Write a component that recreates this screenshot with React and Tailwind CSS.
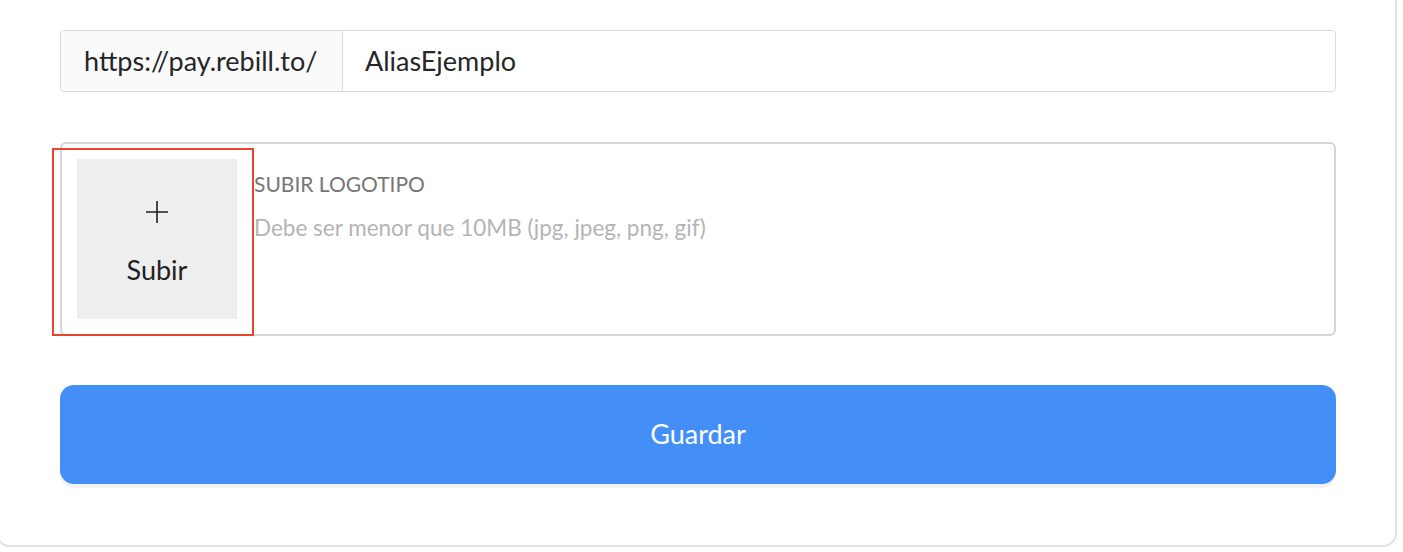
export default function App() {
  return (
    <div
      className="w-[1403px] h-[552px] bg-white overflow-hidden"
      style={{ fontFamily: '"Source Sans Pro", Lato, "Noto Sans", sans-serif' }}
    >
      <div className="ml-[-4px] mt-[-20px] w-[1401px] h-[567px] bg-white border-2 border-[#e2e2e2] rounded-[14px] pt-[48px] pl-[62px] pr-[59px]">
        <div className="flex h-[62px] border border-[#d9d9d9] rounded-[4px] overflow-hidden">
          <div className="w-[282px] shrink-0 bg-[#fafafa] border-r border-[#d9d9d9] flex items-center pl-[23px] text-[27px] text-[#262626]">
            https://pay.rebill.to/
          </div>
          <input
            className="flex-1 pl-[22px] text-[27px] text-[#262626] outline-none bg-white"
            defaultValue="AliasEjemplo"
          />
        </div>

        <div className="relative mt-[50px] h-[194px] border-2 border-[#d6d6d6] rounded-[6px] flex pt-[15px] pl-[15px]">
          <div className="w-[160px] h-[160px] bg-[#eeeeee] flex flex-col items-center pt-[41px] shrink-0">
            <svg width="24" height="24" viewBox="0 0 24 24">
              <path d="M12 1v22M1 12h22" stroke="#1f1f1f" strokeWidth="1.6" fill="none" />
            </svg>
            <span className="mt-[32px] text-[27px] text-[#222] leading-none">Subir</span>
          </div>
          <div className="pl-[17px] pt-[12px]">
            <div className="text-[21px] text-[#767676] leading-[26px]">SUBIR LOGOTIPO</div>
            <div className="mt-[18px] text-[22.5px] text-[#b4b4b4] leading-[26px]">
              Debe ser menor que 10MB (jpg, jpeg, png, gif)
            </div>
          </div>
          <div className="absolute left-[-10px] top-[4px] w-[202px] h-[188px] border-2 border-[#e8452d] pointer-events-none" />
        </div>

        <button className="mt-[49px] w-full h-[99px] bg-[#448ff7] rounded-[14px] text-white text-[27px] shadow-[0_4px_0_rgba(0,0,0,0.05)]">
          Guardar
        </button>
      </div>
    </div>
  );
}
